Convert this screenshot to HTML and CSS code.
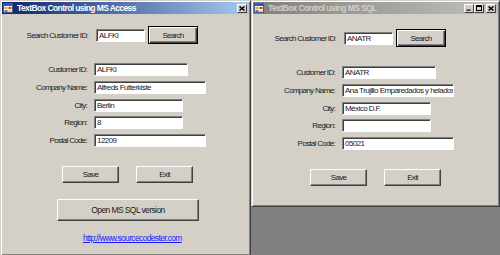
FILE: index.html
```html
<!DOCTYPE html>
<html>
<head>
<meta charset="utf-8">
<link rel="stylesheet" href="styles.css">
</head>
<body>
<div class="win win-access">
  <div class="titlebar active">
    <svg class="app-icon" width="10" height="10" viewBox="0 0 10 10"><rect x="0.5" y="0.5" width="9" height="9" fill="#f4f4f4" stroke="#4a5a8a"/><rect x="1" y="1" width="8" height="2" fill="#2a58c8"/><rect x="1.5" y="4" width="3" height="2" fill="#f0a020"/><rect x="5.5" y="4" width="3" height="2" fill="#e04020"/><rect x="1.5" y="7" width="3" height="2" fill="#3a7ad8"/><rect x="5.5" y="7" width="3" height="2" fill="#f8d040"/></svg>
    <span class="title">TextBox Control using MS Access</span>
    <span class="controls">
      <span class="cbtn"><svg width="6" height="5" viewBox="0 0 6 5"><path d="M0.5 0.5 L5.5 4.5 M5.5 0.5 L0.5 4.5" stroke="#000" stroke-width="1.4"/></svg></span>
    </span>
  </div>
  <div class="body">
    <div class="search-row">
      <label class="lbl">Search Customer ID:</label>
      <div class="tb tb-search">ALFKI</div>
      <div class="btn btn-default btn-search">Search</div>
    </div>
    <div class="form">
      <label class="lbl">Customer ID:</label><div class="tb tb-id">ALFKI</div>
      <label class="lbl">Company Name:</label><div class="tb tb-long">Alfreds Futterkiste</div>
      <label class="lbl">City:</label><div class="tb tb-mid">Berlin</div>
      <label class="lbl">Region:</label><div class="tb tb-mid">8</div>
      <label class="lbl">Postal Code:</label><div class="tb tb-long">12209</div>
    </div>
    <div class="actions">
      <div class="btn btn-action">Save</div>
      <div class="btn btn-action">Exit</div>
    </div>
    <div class="btn btn-wide">Open MS SQL version</div>
    <a class="link" href="#">http://www.sourcecodester.com</a>
  </div>
</div>
<div class="win win-sql">
  <div class="titlebar inactive">
    <svg class="app-icon" width="10" height="10" viewBox="0 0 10 10"><rect x="0.5" y="0.5" width="9" height="9" fill="#f4f4f4" stroke="#4a5a8a"/><rect x="1" y="1" width="8" height="2" fill="#2a58c8"/><rect x="1.5" y="4" width="3" height="2" fill="#f0a020"/><rect x="5.5" y="4" width="3" height="2" fill="#e04020"/><rect x="1.5" y="7" width="3" height="2" fill="#3a7ad8"/><rect x="5.5" y="7" width="3" height="2" fill="#f8d040"/></svg>
    <span class="title">TextBox Control using MS SQL</span>
    <span class="controls">
      <span class="cbtn"><svg width="6" height="6" viewBox="0 0 6 6"><rect x="0.5" y="4.5" width="4" height="1.2" fill="#000"/></svg></span>
      <span class="cbtn"><svg width="6" height="6" viewBox="0 0 6 6"><rect x="0.5" y="0.5" width="5" height="5" fill="none" stroke="#000"/><rect x="0.5" y="0.5" width="5" height="1.5" fill="#000"/></svg></span>
      <span class="cbtn cbtn-close"><svg width="6" height="5" viewBox="0 0 6 5"><path d="M0.5 0.5 L5.5 4.5 M5.5 0.5 L0.5 4.5" stroke="#000" stroke-width="1.4"/></svg></span>
    </span>
  </div>
  <div class="body">
    <div class="search-row">
      <label class="lbl">Search Customer ID:</label>
      <div class="tb tb-search">ANATR</div>
      <div class="btn btn-default btn-search">Search</div>
    </div>
    <div class="form">
      <label class="lbl">Customer ID:</label><div class="tb tb-id">ANATR</div>
      <label class="lbl">Company Name:</label><div class="tb tb-long">Ana Trujillo Emparedados y helados</div>
      <label class="lbl">City:</label><div class="tb tb-mid">México D.F.</div>
      <label class="lbl">Region:</label><div class="tb tb-mid"></div>
      <label class="lbl">Postal Code:</label><div class="tb tb-long">05021</div>
    </div>
    <div class="actions">
      <div class="btn btn-action">Save</div>
      <div class="btn btn-action">Exit</div>
    </div>
  </div>
</div>
</body>
</html>
```

FILE: styles.css
```css
* { box-sizing: border-box; margin: 0; padding: 0; }
html, body { width: 500px; height: 255px; overflow: hidden; }
body {
  display: flex;
  align-items: flex-start;
  background: #808080;
  font-family: "Liberation Sans", Arial, sans-serif;
  font-size: 8px;
  letter-spacing: -0.7px;
  color: #1a1a1a;
}
.win {
  background: #d4d0c8;
  border: 1px solid;
  border-color: #d4d0c8 #404040 #404040 #d4d0c8;
  box-shadow: inset 1px 1px 0 #fff, inset -1px -1px 0 #808080;
  padding: 1px 1px 0;
  display: flex;
  flex-direction: column;
}
.win-access { width: 251px; height: 256px; }
.win-sql { width: 249px; height: 207px; }

.titlebar {
  height: 12px;
  display: flex;
  align-items: center;
  padding-left: 1px;
  padding-right: 2px;
}
.titlebar.active { background: linear-gradient(to right, #0a246a, #a6caf0); }
.titlebar.inactive { background: linear-gradient(to right, #808080, #c0c0c0); }
.app-icon { flex: none; }
.title {
  margin-left: 4px;
  font-weight: bold;
  font-size: 8.5px;
  letter-spacing: -0.6px;
  white-space: nowrap;
}
.active .title { color: #fff; }
.inactive .title { color: #d4d0c8; }
.controls { margin-left: auto; display: flex; }
.cbtn {
  width: 10px;
  height: 9px;
  background: #d4d0c8;
  border: 1px solid;
  border-color: #fff #404040 #404040 #fff;
  display: flex;
  align-items: center;
  justify-content: center;
}
.cbtn-close { margin-left: 2px; }

.body { display: flex; flex-direction: column; align-items: flex-start; }
.win-access .body { padding: 12px 0 0 3px; }
.win-sql .body { padding: 15px 0 0 0; }

.lbl { text-align: right; white-space: nowrap; line-height: 13px; }

.search-row {
  display: grid;
  grid-template-columns: 83px 49px 45px;
  column-gap: 8px;
  align-items: center;
  height: 18px;
}
.search-row .btn-search { margin-left: -5px; }

.tb {
  height: 13px;
  background: #fff;
  border: 1px solid;
  border-color: #808080 #fff #fff #808080;
  box-shadow: inset 1px 1px 0 #404040;
  padding: 0 0 0 2px;
  line-height: 11px;
  letter-spacing: -0.55px;
  white-space: nowrap;
  overflow: hidden;
}
.tb-search { width: 49px; }
.tb-id { width: 94px; }
.tb-long { width: 112px; }
.tb-mid { width: 89px; }

.form {
  margin-top: 19px;
  display: grid;
  grid-template-columns: 82px auto;
  grid-auto-rows: 13px;
  column-gap: 7px;
  row-gap: 4.75px;
  align-items: center;
  justify-items: start;
}
.form .lbl { justify-self: end; }

.btn {
  background: #d4d0c8;
  border: 1px solid;
  border-color: #fff #404040 #404040 #fff;
  box-shadow: inset -1px -1px 0 #808080;
  display: flex;
  align-items: center;
  justify-content: center;
  white-space: nowrap;
}
.btn-default {
  border-color: #000;
  box-shadow: inset 1px 1px 0 #fff, inset -1px -1px 0 #404040, inset -2px -2px 0 #808080;
}
.btn-search { height: 18px; }

.actions {
  margin: 19px 0 0 57px;
  display: flex;
  gap: 17px;
}
.btn-action { width: 57px; height: 17px; }

.btn-wide {
  margin: 16px 0 0 52px;
  width: 142px;
  height: 22px;
  font-size: 8.5px;
  letter-spacing: -0.6px;
}
.link {
  margin: 12px 0 0 78px;
  color: #1a1aff;
  text-decoration: underline;
  font-size: 8.5px;
  letter-spacing: -0.65px;
}
```
